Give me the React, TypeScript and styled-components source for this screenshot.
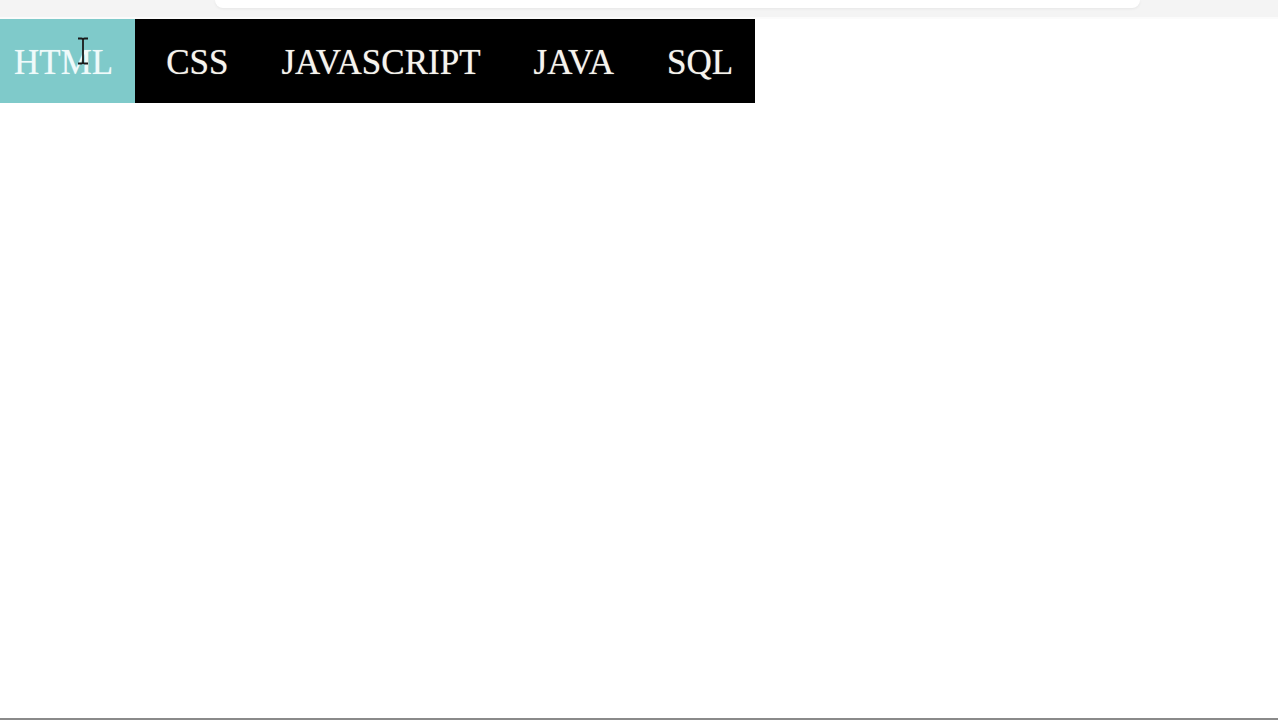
import React from "react";
import styled, { createGlobalStyle } from "styled-components";

const Global = createGlobalStyle`
  html, body { margin: 0; padding: 0; background: #ffffff; }
  #root { height: 100vh; }
`;

const Page = styled.div`
  height: 100vh;
  display: flex;
  flex-direction: column;
  box-sizing: border-box;
  border-bottom: 2px solid #8a8a8a;
  font-family: "Liberation Serif", "Times New Roman", serif;
`;

const Chrome = styled.div`
  height: 17px;
  background: #f4f4f4;
  border-bottom: 2px solid #fbfbfb;
  display: flex;
  justify-content: center;
  align-items: flex-start;
`;

const AddressTail = styled.div`
  width: 925px;
  height: 8px;
  margin-left: 77px;
  background: #ffffff;
  border-radius: 0 0 10px 10px;
  box-shadow: 0 1px 3px rgba(0, 0, 0, 0.06);
`;

const Nav = styled.ul`
  list-style: none;
  margin: 0;
  padding: 0;
  display: flex;
  align-self: flex-start;
  gap: 17px;
  background: #000000;
  height: 84px;
`;

const Item = styled.li<{ $active?: boolean }>`
  position: relative;
  display: flex;
  align-items: center;
  padding: 4px 22px 0 14px;
  font-size: 35px;
  color: ${(p) => (p.$active ? "#effafa" : "#f6f4ee")};
  background: ${(p) => (p.$active ? "#7fcaca" : "transparent")};
  text-shadow: 0 0 1px ${(p) => (p.$active ? "rgba(255,255,255,0.5)" : "rgba(255,255,240,0.6)")};
`;

const Cursor = styled.svg`
  position: absolute;
  left: 76px;
  top: 18px;
  pointer-events: none;
`;

const Body = styled.div`
  flex: 1;
`;

const items = ["HTML", "CSS", "JAVASCRIPT", "JAVA", "SQL"];

export default function App() {
  return (
    <>
      <Global />
      <Page>
        <Chrome>
          <AddressTail />
        </Chrome>
        <Nav>
          {items.map((t, i) => (
            <Item key={t} $active={i === 0}>
              {t}
              {i === 0 && (
                <Cursor width="14" height="28" viewBox="0 0 14 28">
                  <path
                    d="M2 1.5 H5.5 Q7 1.5 7 3 V25 Q7 26.5 5.5 26.5 H2 M12 1.5 H8.5 Q7 1.5 7 3 M7 25 Q7 26.5 8.5 26.5 H12"
                    fill="none"
                    stroke="#1a1a1a"
                    strokeWidth="1.8"
                  />
                </Cursor>
              )}
            </Item>
          ))}
        </Nav>
        <Body />
      </Page>
    </>
  );
}
